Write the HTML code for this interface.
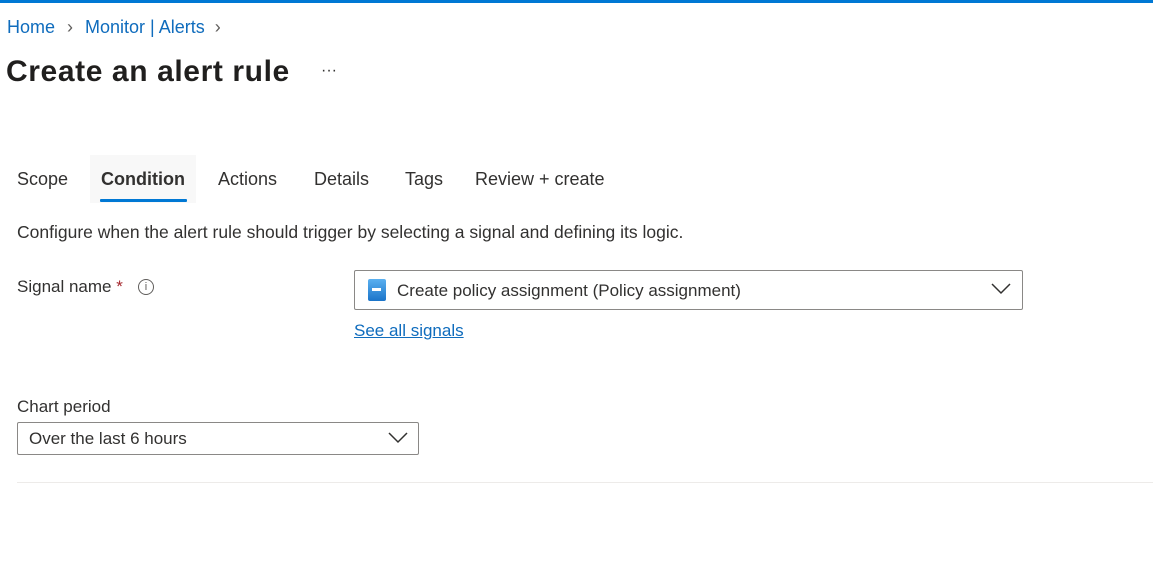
<!DOCTYPE html>
<html><head><style>
body{margin:0;width:1153px;height:564px;background:#fff;font-family:"Liberation Sans",sans-serif;color:#323130;position:relative;overflow:hidden}
.a{position:absolute;white-space:nowrap}
</style></head><body>
<div class="a" style="left:0;top:0;width:1153px;height:3px;background:#0078d4"></div>
<div class="a" style="left:7px;top:17px;font-size:18px;color:#0f6cbd">Home <span style="color:#605e5c;margin:0 7px">&#8250;</span> Monitor | Alerts <span style="color:#605e5c;margin-left:5px">&#8250;</span></div>
<div class="a" style="left:6px;top:55px;font-size:30px;font-weight:600;color:#201f1e;letter-spacing:0.6px">Create an alert rule</div>
<div class="a" style="left:321px;top:62px;font-size:16px;color:#323130">···</div>
<div class="a" style="left:90px;top:155px;width:106px;height:48px;background:#f8f8f8"></div>
<div class="a" style="left:17px;top:169px;font-size:18px;color:#323130">Scope</div>
<div class="a" style="left:101px;top:169px;font-size:18px;font-weight:bold;color:#323130">Condition</div>
<div class="a" style="left:100px;top:199px;width:87px;height:3px;background:#0078d4;border-radius:1px"></div>
<div class="a" style="left:218px;top:169px;font-size:18px">Actions</div>
<div class="a" style="left:314px;top:169px;font-size:18px">Details</div>
<div class="a" style="left:405px;top:169px;font-size:18px">Tags</div>
<div class="a" style="left:475px;top:169px;font-size:18px">Review + create</div>
<div class="a" style="left:17px;top:222px;font-size:17.5px">Configure when the alert rule should trigger by selecting a signal and defining its logic.</div>
<div class="a" style="left:17px;top:277px;font-size:17px">Signal name <span style="color:#a4262c">*</span></div>
<div class="a" style="left:138px;top:279px;width:14px;height:14px;border:1px solid #605e5c;border-radius:50%;font-size:11px;text-align:center;line-height:14px;color:#605e5c">i</div>
<div class="a" style="left:354px;top:270px;width:667px;height:38px;border:1px solid #8a8886;border-radius:2px"></div>
<div class="a" style="left:368px;top:279px;width:18px;height:22px;background:linear-gradient(#5ab0f0,#1b74c9);border-radius:2px"><div style="position:absolute;left:4px;top:9px;width:9px;height:3px;background:#fff"></div></div>
<div class="a" style="left:397px;top:281px;font-size:17px">Create policy assignment (Policy assignment)</div>
<svg class="a" style="left:991px;top:283px" width="20" height="12"><path d="M1 1 L10 10 L19 1" stroke="#323130" stroke-width="1.5" fill="none"/></svg>
<div class="a" style="left:354px;top:321px;font-size:17px;color:#0f6cbd;text-decoration:underline">See all signals</div>
<div class="a" style="left:17px;top:397px;font-size:17px">Chart period</div>
<div class="a" style="left:17px;top:422px;width:400px;height:31px;border:1px solid #8a8886;border-radius:2px"></div>
<div class="a" style="left:29px;top:429px;font-size:17px">Over the last 6 hours</div>
<svg class="a" style="left:388px;top:432px" width="20" height="12"><path d="M1 1 L10 10 L19 1" stroke="#323130" stroke-width="1.5" fill="none"/></svg>
<div class="a" style="left:17px;top:482px;width:1136px;height:1px;background:#edebe9"></div>
</body></html>
